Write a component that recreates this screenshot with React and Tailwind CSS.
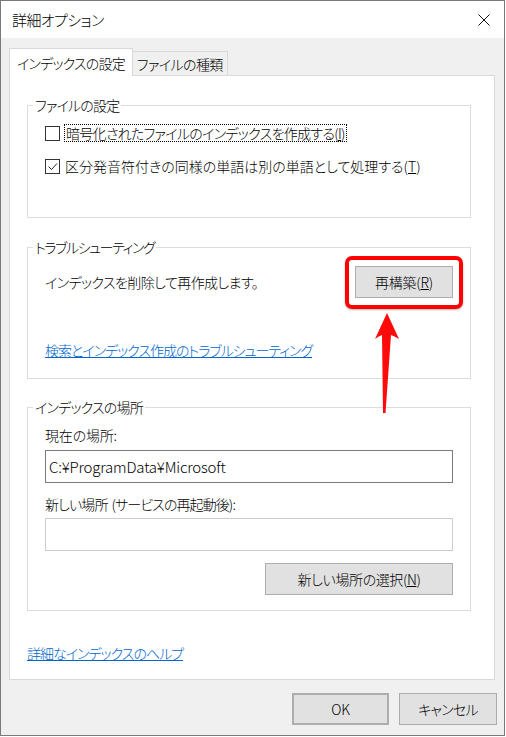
import React from 'react';

const Checkbox = ({ checked }) => (
    <span className="w-[15px] h-[15px] border border-[#333333] bg-white flex items-center justify-center shrink-0">
        {checked && (
            <svg width="11" height="11" viewBox="0 0 11 11">
                <polyline points="1.5,5.5 4.5,8.5 10,2.5" fill="none" stroke="#222" strokeWidth="1" />
            </svg>
        )}
    </span>
);

const Button = ({ children, className = '' }) => (
    <div className={`h-[32px] bg-[#e1e1e1] border border-[#adadad] flex items-center justify-center ${className}`}>
        {children}
    </div>
);

const App = () => {
    return (
        <div className="relative w-[505px] h-[736px] border border-[#7a7a7a] bg-[#f0f0f0] flex flex-col text-[14px] leading-[20px] tracking-[-0.2px] font-light text-black font-['Noto_Sans_CJK_JP',sans-serif] [font-feature-settings:'palt']">
            {/* title bar */}
            <div className="h-[37px] bg-white flex items-center justify-between pl-[11px] pr-[14px] shrink-0">
                <span className="text-[15px] tracking-[-0.6px]">詳細オプション</span>
                <svg width="12" height="12" viewBox="0 0 12 12">
                    <path d="M0.5 0.5 L11.5 11.5 M11.5 0.5 L0.5 11.5" stroke="#111" strokeWidth="1" />
                </svg>
            </div>

            {/* tabs */}
            <div className="flex items-end ml-[8px] mt-[10px]">
                <div className="relative z-10 -mb-px h-[28px] bg-white border border-b-0 border-[#d9d9d9] px-[7px] flex items-center tracking-[-0.8px]">
                    インデックスの設定
                </div>
                <div className="h-[24px] bg-[#f0f0f0] border border-l-0 border-b-0 border-[#d9d9d9] px-[4px] flex items-center tracking-[-0.6px]">
                    ファイルの種類
                </div>
            </div>

            {/* panel */}
            <div className="ml-[8px] w-[486px] h-[605px] bg-white border border-[#d9d9d9] pl-[17px] pr-[23px] pt-[19px] flex flex-col">
                <fieldset className="h-[123px] border border-[#dcdcdc]">
                    <legend className="ml-[5px] px-[2px] tracking-[-0.8px]">ファイルの設定</legend>
                    <div className="pl-[17px]">
                        <div className="mt-[9px] flex items-center gap-[4px]">
                            <Checkbox />
                            <span className="border border-dotted border-black px-[1px] leading-[16px] tracking-[-0.7px]">
                                暗号化されたファイルのインデックスを作成する(<span className="underline">I</span>)
                            </span>
                        </div>
                        <div className="mt-[14px] flex items-center gap-[5px]">
                            <Checkbox checked />
                            <span className="tracking-[0px]">
                                区分発音符付きの同様の単語は別の単語として処理する(<span className="underline">T</span>)
                            </span>
                        </div>
                    </div>
                </fieldset>

                <fieldset className="mt-[19px] h-[142px] border border-[#dcdcdc]">
                    <legend className="ml-[5px] px-[2px] tracking-[-1.4px]">トラブルシューティング</legend>
                    <div className="px-[17px]">
                        <div className="mt-[9px] flex items-center justify-between">
                            <span className="tracking-[-0.6px]">インデックスを削除して再作成します。</span>
                            <div className="relative">
                                <Button className="w-[98px]">
                                    再構築(<span className="underline">R</span>)
                                </Button>
                                <div className="absolute -left-[10px] -right-[10px] -top-[10px] -bottom-[11px] border-[4px] border-[#ff0000] rounded-[7px] shadow-[0_1px_2px_rgba(0,0,0,0.3)]"></div>
                            </div>
                        </div>
                        <div className="mt-[42px] text-[#0066cc] underline tracking-[-1px]">検索とインデックス作成のトラブルシューティング</div>
                    </div>
                </fieldset>

                <fieldset className="mt-[18px] h-[214px] border border-[#dcdcdc]">
                    <legend className="ml-[5px] px-[2px] tracking-[-0.8px]">インデックスの場所</legend>
                    <div className="px-[17px]">
                        <div className="mt-[8px]">現在の場所:</div>
                        <div className="mt-[5px] h-[33px] border border-[#7a7a7a] flex items-center px-[3px] text-[15px]">
                            C:¥ProgramData¥Microsoft
                        </div>
                        <div className="mt-[11px] tracking-[-0.9px]">
                            <span className="mr-[4px]">新しい場所</span>(サービスの再起動後):
                        </div>
                        <div className="mt-[4px] h-[33px] border border-[#cccccc]"></div>
                        <div className="mt-[12px] flex justify-end">
                            <Button className="w-[188px] tracking-[-0.4px]">
                                新しい場所の選択(<span className="underline">N</span>)
                            </Button>
                        </div>
                    </div>
                </fieldset>

                <div className="mt-[32px] text-[#0066cc] underline self-start tracking-[-1px]">詳細なインデックスのヘルプ</div>
            </div>

            {/* bottom buttons */}
            <div className="mt-[13px] flex justify-end gap-[10px] pr-[7px]">
                <Button className="w-[97px] border-2 border-[#0078d7]">OK</Button>
                <Button className="w-[98px] tracking-[-0.8px]">キャンセル</Button>
            </div>

            {/* annotation arrow */}
            <svg className="absolute left-[369px] top-[309px]" width="32" height="106" viewBox="0 0 32 106">
                <path d="M17 3 L29 29 Q24 26 21 25 L15.5 103 L13 103 L12 25 Q9 26 5 29 Z" fill="#ff0a0a" />
            </svg>
        </div>
    );
};

export default App;
